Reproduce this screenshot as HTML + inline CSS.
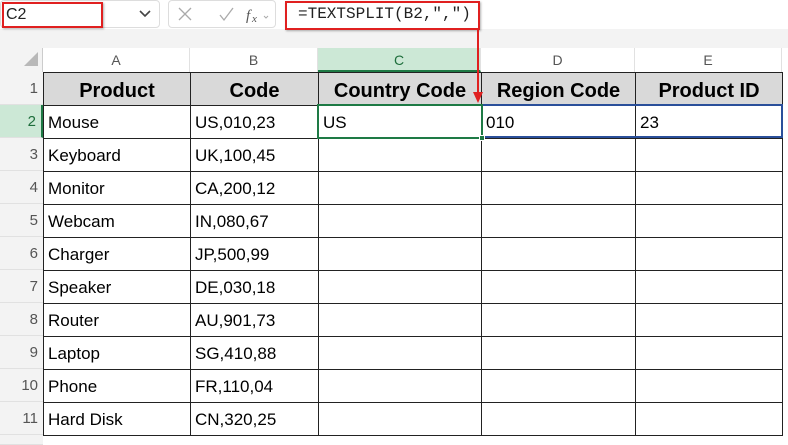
<!DOCTYPE html>
<html><head><meta charset="utf-8"><style>
*{margin:0;padding:0;box-sizing:border-box}
body{width:788px;height:442px;overflow:hidden;background:#fff;font-family:"Liberation Sans",Arial,sans-serif;position:relative}
.a{position:absolute}
.ch{position:absolute;top:48px;height:24px;text-align:center;font-size:14px;color:#555;line-height:24px;border-right:1px solid #e1e1e1}
.rh{position:absolute;left:0;width:43px;height:33px;text-align:right;padding-right:5px;font-size:15px;color:#555;line-height:33px;background:#f3f3f3;border-bottom:1px solid #e1e1e1}
.c{position:absolute;height:34px;border:1px solid #222;margin-left:-1px;margin-top:-1px;font-size:17px;line-height:34px;padding-left:4px;color:#000;white-space:nowrap}
.h{background:#d9d9d9;font-weight:bold;font-size:20px;text-align:center;padding-left:0;line-height:36px}
</style></head><body>
<div class="a" style="left:0;top:0;width:788px;height:29px;background:#fff"></div>
<div class="a" style="left:0;top:29px;width:788px;height:19px;background:#f3f3f3"></div>
<div class="a" style="left:0;top:0;width:160px;height:28px;border:1px solid #ddd;border-radius:4px"></div>
<div class="a" style="left:2px;top:2px;width:101px;height:26px;border:2px solid #e02020;box-shadow:1px 1px 2px rgba(0,0,0,.3)"></div>
<div class="a" style="left:6px;top:6px;font-size:16px;color:#222">C2</div>
<svg class="a" style="left:138px;top:9px" width="14" height="10"><path d="M2 2l5 5 5-5" stroke="#444" stroke-width="1.6" fill="none"/></svg>
<div class="a" style="left:168px;top:0;width:108px;height:28px;border:1px solid #ddd;border-radius:4px"></div>
<svg class="a" style="left:176px;top:5px" width="100" height="20"><path d="M3 3l12 12M15 3L3 15" stroke="#aaa" stroke-width="1.3"/><path d="M44 10l4 5 9-12" stroke="#aaa" stroke-width="1.3" fill="none"/><text x="70" y="15" font-family="Liberation Serif" font-style="italic" font-size="15" fill="#555">f</text><text x="76" y="17" font-family="Liberation Serif" font-style="italic" font-size="11" fill="#555">x</text><path d="M88 11l2 2 2-2" stroke="#aaa" fill="none"/></svg>
<div class="a" style="left:285px;top:1px;width:195px;height:29px;border:2px solid #e02020;box-shadow:1px 1px 2px rgba(0,0,0,.3);background:#fff"></div>
<div class="a" style="left:298px;top:5px;font-family:'Liberation Mono',monospace;font-size:16px;color:#222">=TEXTSPLIT(B2,",")</div>
<div class="a" style="left:0;top:48px;width:43px;height:24px;background:#f3f3f3;border-right:1px solid #ccc"></div>
<svg class="a" style="left:22px;top:50px" width="18" height="18"><path d="M16 2V16H2Z" fill="#b8b8b8"/></svg>
<div class="ch" style="left:43px;width:147px">A</div>
<div class="ch" style="left:190px;width:128px">B</div>
<div class="ch" style="left:318px;width:163px;background:#cce8d6;color:#1e6e3c;border-bottom:2px solid #1e7a45">C</div>
<div class="ch" style="left:481px;width:154px">D</div>
<div class="ch" style="left:635px;width:147px">E</div>
<div class="rh" style="top:72px">1</div>
<div class="rh" style="top:105px;background:#cce8d6;color:#1e6e3c;border-right:2px solid #1e7a45">2</div>
<div class="rh" style="top:138px">3</div><div class="rh" style="top:171px">4</div><div class="rh" style="top:204px">5</div><div class="rh" style="top:237px">6</div><div class="rh" style="top:270px">7</div><div class="rh" style="top:303px">8</div><div class="rh" style="top:336px">9</div><div class="rh" style="top:369px">10</div><div class="rh" style="top:402px">11</div>
<div class="rh" style="top:435px;height:10px"></div>
<div id="g"></div>
<script>
var cols=[[44,147],[191,128],[319,163],[482,154],[636,147]];
var hd=["Product","Code","Country Code","Region Code","Product ID"];
var d=[["Mouse","US,010,23","US","010","23"],["Keyboard","UK,100,45"],["Monitor","CA,200,12"],["Webcam","IN,080,67"],["Charger","JP,500,99"],["Speaker","DE,030,18"],["Router","AU,901,73"],["Laptop","SG,410,88"],["Phone","FR,110,04"],["Hard Disk","CN,320,25"]];
var h="";
for(var j=0;j<5;j++)h+='<div class="c h" style="left:'+cols[j][0]+'px;top:73px;width:'+(cols[j][1]+1)+'px">'+hd[j]+'</div>';
for(var i=0;i<10;i++)for(var j=0;j<5;j++)h+='<div class="c" style="left:'+cols[j][0]+'px;top:'+(106+33*i)+'px;width:'+(cols[j][1]+1)+'px">'+(d[i][j]||"")+'</div>';
document.getElementById("g").innerHTML=h;
</script>
<div class="a" style="left:481px;top:104px;width:302px;height:34px;border:2px solid #2a4f9a"></div>
<div class="a" style="left:317px;top:104px;width:166px;height:35px;border:2px solid #1e7a45"></div>
<div class="a" style="left:479px;top:135px;width:6px;height:6px;background:#1e7a45;border:1px solid #fff"></div>
<div class="a" style="left:477px;top:30px;width:2px;height:64px;background:#e02020"></div>
<svg class="a" style="left:473px;top:92px" width="10" height="12"><path d="M0 0H10L5 11Z" fill="#e02020"/></svg>
</body></html>
